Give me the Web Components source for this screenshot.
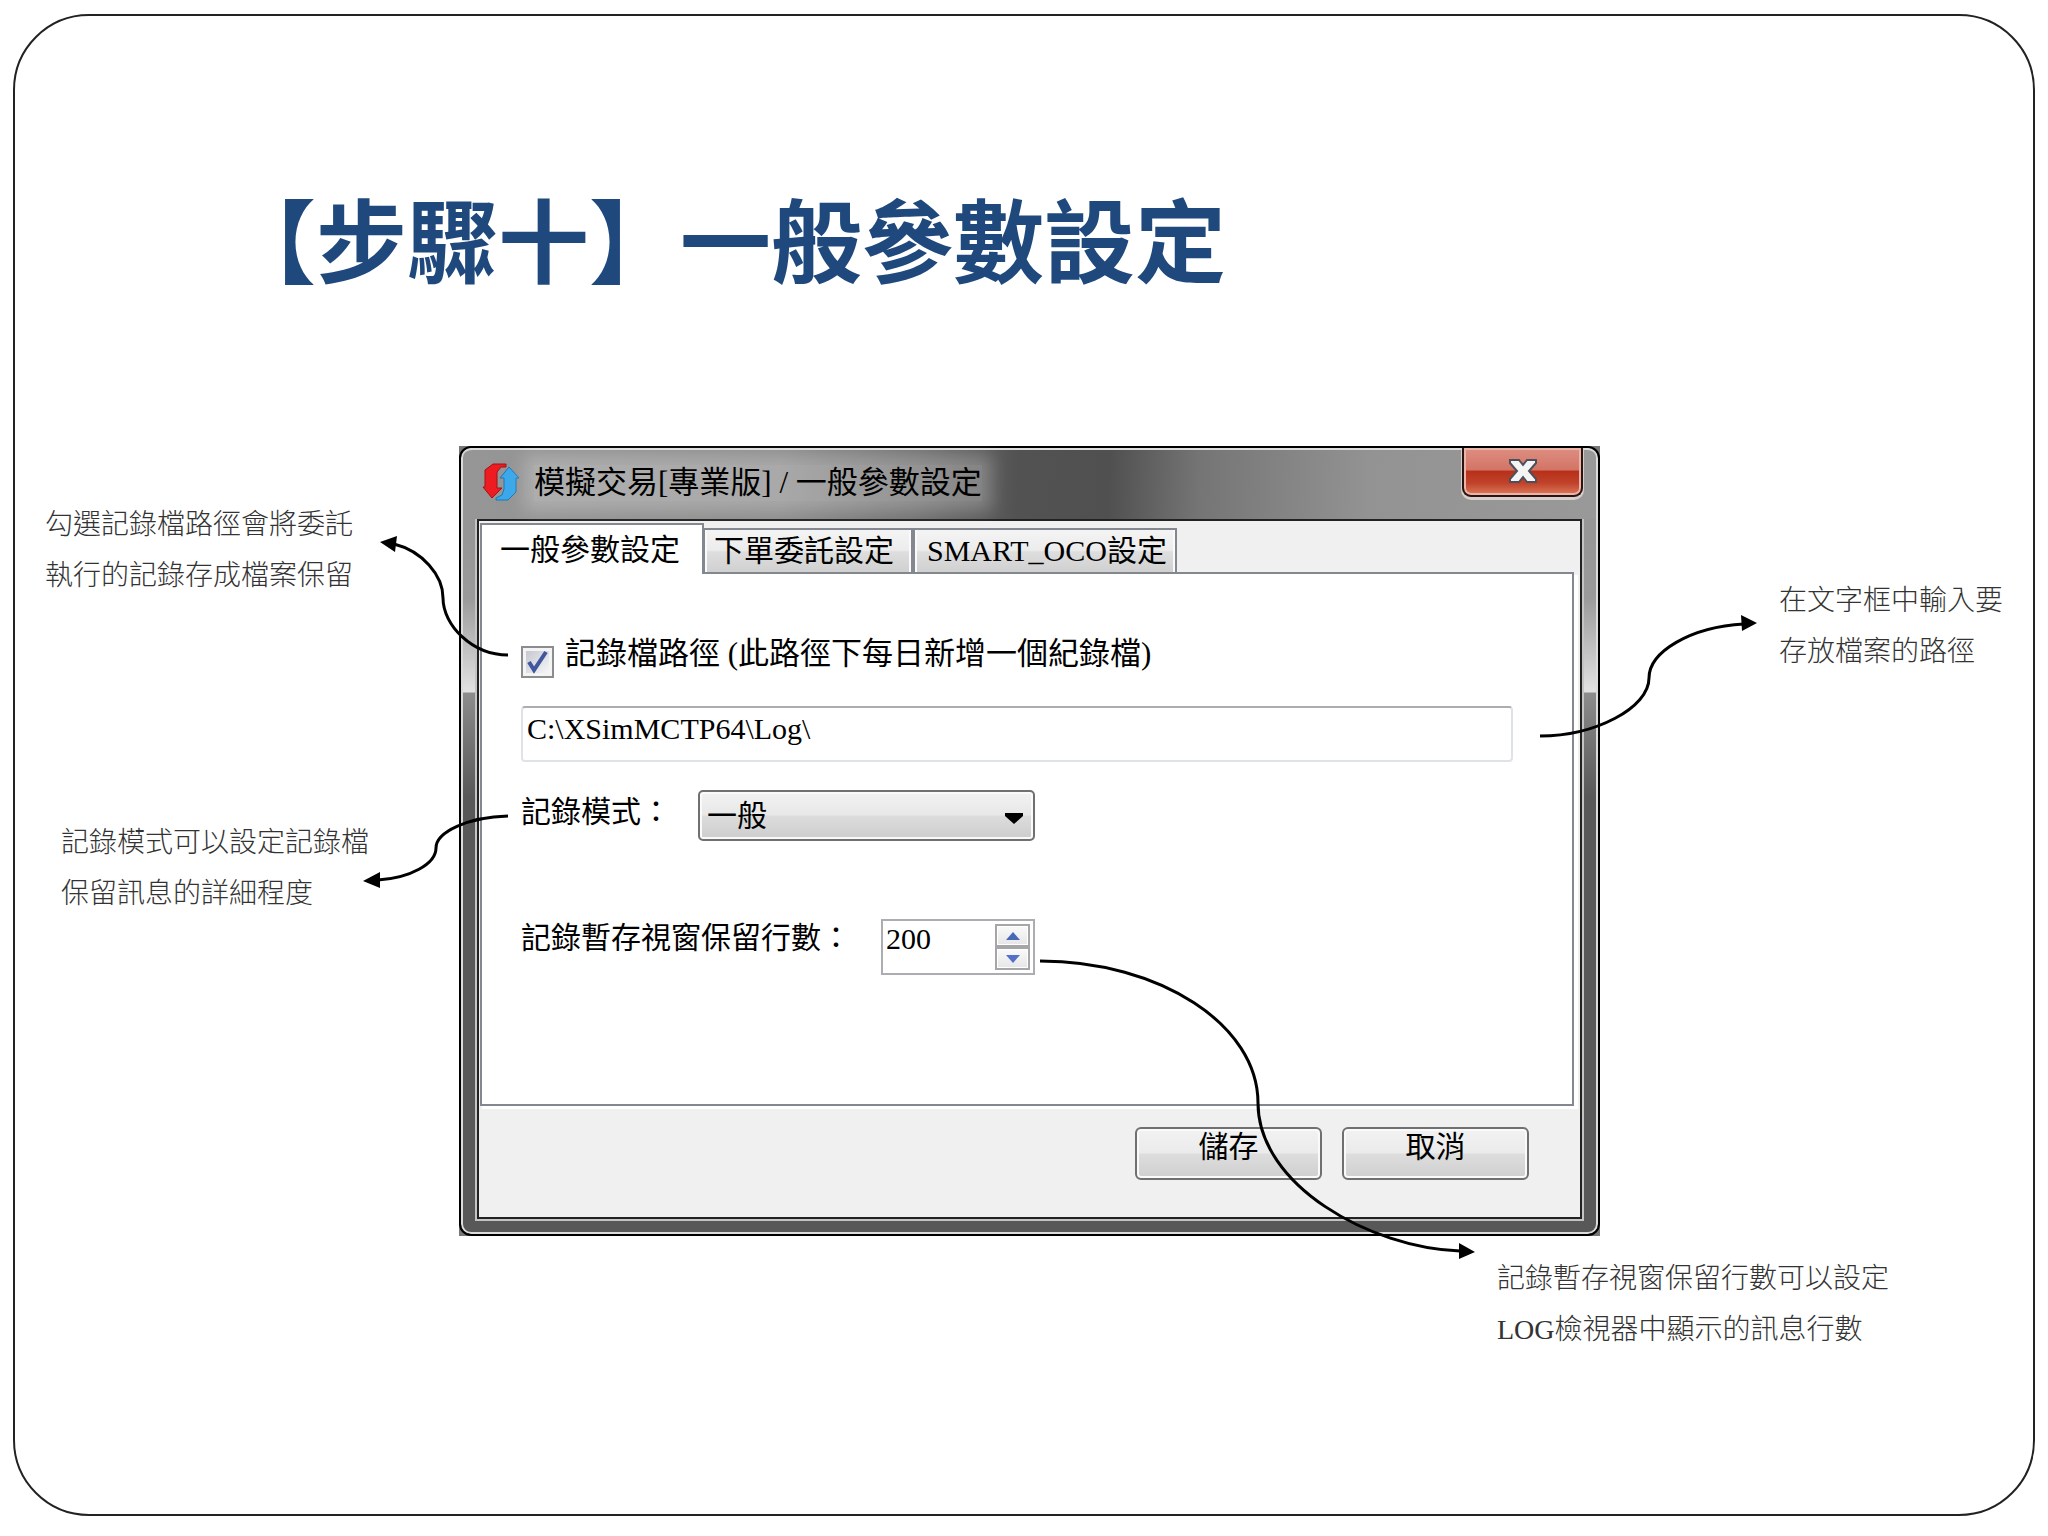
<!DOCTYPE html>
<html lang="zh-Hant">
<head>
<meta charset="utf-8">
<title>一般參數設定</title>
<style>
  body { margin: 0; background: #fff; color: #000; font-family: "Liberation Serif", "Noto Sans CJK TC", serif; }
</style>
</head>
<body>
<slide-page>
  <span slot="title">【步驟十】一般參數設定</span>
  <side-note slot="left" class="path">勾選記錄檔路徑會將委託<br>執行的記錄存成檔案保留</side-note>
  <side-note slot="left" class="mode">記錄模式可以設定記錄檔<br>保留訊息的詳細程度</side-note>
  <app-window slot="window" heading="模擬交易[專業版] / 一般參數設定">
    <tab-bar slot="tabs" items="一般參數設定,下單委託設定,SMART_OCO設定"></tab-bar>
    <check-field label="記錄檔路徑 (此路徑下每日新增一個紀錄檔)"></check-field>
    <path-field label="記錄檔路徑" value="C:\XSimMCTP64\Log\"></path-field>
    <select-field label="記錄模式：" option="一般"></select-field>
    <spin-field label="記錄暫存視窗保留行數：" value="200"></spin-field>
    <push-button slot="actions">儲存</push-button>
    <push-button slot="actions">取消</push-button>
  </app-window>
  <side-note slot="right">在文字框中輸入要<br>存放檔案的路徑</side-note>
  <side-note slot="below">記錄暫存視窗保留行數可以設定<br>LOG檢視器中顯示的訊息行數</side-note>
  <callout-arrows slot="overlay"></callout-arrows>
</slide-page>

<script>
  const define = (name, markup) => customElements.define(name, class extends HTMLElement {
    constructor() {
      super();
      const html = typeof markup === 'function' ? markup(this) : markup;
      this.attachShadow({ mode: 'open' }).innerHTML =
        '<style>*{box-sizing:border-box} button,input,select{font:inherit;color:inherit;margin:0}</style>' + html;
    }
  });

  define('slide-page', `
    <style>
      :host { display: block; box-sizing: border-box; margin: 14px 13px 20px; min-height: calc(100vh - 34px);
        border: 2px solid #222; border-radius: 76px; padding-top: 160px; }
      h1 { margin: 0 0 150px; padding-left: 210px; font: 700 91px/120px "Noto Sans CJK TC", sans-serif; color: #1f497d; }
      .stage { position: relative; }
      .cols { display: grid; grid-template-columns: minmax(0,444fr) minmax(0,1141fr) minmax(0,433fr); }
      .left { padding: 53px 0 0 30px; display: flex; flex-direction: column; gap: 216px; }
      .right { padding: 129px 0 0 179px; }
      .below { display: grid; grid-template-columns: minmax(0,1482fr) minmax(0,536fr); padding-top: 17px; }
      .below slot { display: block; grid-column: 2; }
      .left ::slotted(.mode) { padding-left: 16px; }
    </style>
    <h1><slot name="title"></slot></h1>
    <div class="stage">
      <div class="cols">
        <div class="left"><slot name="left"></slot></div>
        <slot name="window"></slot>
        <div class="right"><slot name="right"></slot></div>
      </div>
      <div class="below"><slot name="below"></slot></div>
      <slot name="overlay"></slot>
    </div>`);

  define('side-note', `
    <style>
      :host { display: block; font-size: 28px; line-height: 51px; font-weight: 300; color: #333; white-space: nowrap; }
    </style><slot></slot>`);

  define('app-window', el => `
    <style>
      :host { display: block; background: #777; font-size: 30px; }
      .frame { border: 2px solid #000; border-radius: 12px; padding: 0 16px 15px;
        box-shadow: inset 0 0 0 2px #dcdcdc;
        background: linear-gradient(#969696 0 90px, #9a9a9a 150px, #e2e2e2 244px, #8c8c8c 245px, #585858 350px); }
      header { display: flex; align-items: center; height: 71px; margin: 0 -14px; padding: 0 14px 4px; position: relative;
        border-top: 2px solid #dcdcdc; border-radius: 9px 9px 0 0;
        background: linear-gradient(92deg, #969696 0, #8e8e8e 28%, #727272 40%, #525252 49%, #505050 57%, #757575 65%, #939393 80%, #999 100%); }
      .logo { width: 38px; height: 40px; margin: 0 18px 0 5px; }
      h2 { margin: 0 -4px; font: inherit; font-size: 31px; line-height: 36px; white-space: nowrap;
        background: #ffffff3d; box-shadow: 0 0 16px 10px #ffffff3d; }
      .close { position: absolute; top: -2px; right: 13px; width: 121px; height: 49px; padding: 0; border: 2px solid #2a1512; border-top: 0;
        border-radius: 0 0 9px 9px; box-shadow: inset 0 0 0 2px #eab5a8, 0 2px 0 1px #d8cfcd;
        background: linear-gradient(#de8e82, #d37566 46%, #b8301a 50%, #c0432a 75%, #dc7a5c); }
      .close svg { display: block; width: 32px; height: 28px; margin: -2px auto 0; }
      .client { border: 2px solid #222; box-shadow: 0 0 0 2px #c4c4c4; background: #f0f0f0; }
      .panel { margin: 0 6px 0 1px; padding: 60px 59px 129px 39px; background: #fff; border: 2px solid #828790; border-top: 0;
        display: flex; flex-direction: column; box-shadow: 3px 2px 0 1px #fff; gap: 28px; }
      .panel ::slotted(spin-field) { margin-top: 50px; }
      footer { display: flex; justify-content: flex-end; gap: 20px; padding: 21px 51px 37px; }
    </style>
    <div class="frame">
      <header>
        <svg class="logo" viewBox="0 0 38 40" aria-hidden="true">
          <path d="M24 1H11L3 7V24H1L10 35L20 25H15V9L19 4H24z" fill="#ee1c20" stroke="#a01216"/>
          <path d="M27 4L37 15H34V29L26 37H14V35L20 32L22 26V15H18z" fill="#3aa8ea" stroke="#1b78b8"/>
        </svg>
        <h2>${el.getAttribute('heading')}</h2>
        <button class="close" aria-label="關閉">
          <svg viewBox="0 0 32 28"><path d="M3 3h9l4 5 4-5h9v3l-7 8 7 8v3h-9l-4-5-4 5H3v-3l7-8-7-8z" fill="#f4f4f4" stroke="#4c4f5c" stroke-width="2"/></svg>
        </button>
      </header>
      <div class="client">
        <slot name="tabs"></slot>
        <div class="panel"><slot></slot></div>
        <footer><slot name="actions"></slot></footer>
      </div>
    </div>`);

  define('tab-bar', el => `
    <style>
      :host { display: flex; align-items: flex-end; padding: 2px 6px 0 1px; height: 53px; box-sizing: border-box; }
      button { height: 46px; padding: 0 17px 0 9px; border: 2px solid #828790; border-left-width: 1px; border-radius: 0; white-space: nowrap;
        line-height: 40px; background: linear-gradient(#f4f4f4, #ececec 48%, #dedede 52%, #d0d0d0); box-shadow: inset -2px 0 #fafafa, inset 2px 0 #fafafa; }
      button:last-of-type { padding: 0 8px 0 12px; border-left-width: 2px; }
      button[aria-selected="true"] { height: 51px; padding: 0 22px 0 18px; background: #fff; border-left-width: 2px; border-bottom: 0; box-shadow: none; }
      i { flex: 1; height: 46px; border-bottom: 2px solid #828790; }
    </style>
    ${el.getAttribute('items').split(',').map((t, n) => `<button role="tab" aria-selected="${n === 0}">${t}</button>`).join('')}<i></i>`);

  define('check-field', el => `
    <style>
      :host { display: flex; align-items: flex-start; gap: 11px; height: 44px; }
      .box { position: relative; align-self: flex-end; width: 33px; height: 32px; }
      input { appearance: none; display: block; width: 33px; height: 32px; border: 2px solid #8a8c90;
        background: linear-gradient(135deg, #c4c8d0, #f6f6f6) content-box, #f4f4f4; padding: 3px; }
      svg { position: absolute; inset: 0; pointer-events: none; }
      label { line-height: 40px; font-size: 31px; white-space: nowrap; }
    </style>
    <div class="box"><input id="c" type="checkbox" checked>
      <svg width="33" height="32"><path d="M8 16l5 8L25 6" fill="none" stroke="#40569e" stroke-width="4"/></svg></div>
    <label for="c">${el.getAttribute('label')}</label>`);

  define('path-field', el => `
    <style>
      :host { display: block; }
      input { display: block; width: 100%; height: 56px; padding: 0 4px 11px; border: 2px solid #dfe2e6; border-top-color: #abadb3; border-radius: 4px; background: #fff; outline: 0; }
    </style>
    <input type="text" aria-label="${el.getAttribute('label')}" value="${el.getAttribute('value')}">`);

  define('select-field', el => `
    <style>
      :host { display: flex; align-items: flex-start; gap: 27px; }
      label { line-height: 44px; white-space: nowrap; }
      .box { position: relative; width: 337px; }
      select { appearance: none; display: block; width: 100%; height: 51px; padding: 0 0 0 7px; border: 2px solid #707070; border-radius: 5px;
        background: linear-gradient(#f2f2f2, #e8e8e8 48%, #dcdcdc 52%, #cdcdcd); box-shadow: inset 0 0 0 2px #fafafa; }
      svg { position: absolute; right: 12px; top: 23px; pointer-events: none; }
    </style>
    <label for="s">${el.getAttribute('label')}</label>
    <div class="box"><select id="s"><option>${el.getAttribute('option')}</option></select>
      <svg width="18" height="11"><path d="M0 0h18v3l-9 8-9-8z"/></svg></div>`);

  define('spin-field', el => `
    <style>
      :host { display: flex; align-items: flex-start; gap: 30px; }
      label { line-height: 38px; white-space: nowrap; }
      .box { display: flex; width: 154px; height: 56px; border: 2px solid #abadb3; background: #fff; padding: 3px; }
      input { appearance: textfield; flex: 1; min-width: 0; height: 30px; padding: 0; border: 0; background: none; outline: 0; }
      input::-webkit-inner-spin-button { appearance: none; }
      .steps { display: flex; flex-direction: column; width: 35px; }
      button { flex: 1; padding: 0; border: 2px solid #a6a6a8; background: linear-gradient(#fafafa, #e6e6e8); border-radius: 0; display: grid; place-items: center; box-shadow: inset 0 0 0 1px #fff; }
    </style>
    <label for="n">${el.getAttribute('label')}</label>
    <div class="box"><input id="n" type="number" value="${el.getAttribute('value')}">
      <div class="steps">
        <button aria-label="增加"><svg width="14" height="8"><path d="M7 0l7 8H0z" fill="#4a66b8"/></svg></button>
        <button aria-label="減少"><svg width="14" height="8"><path d="M0 0h14L7 8z" fill="#5570c8"/></svg></button>
      </div></div>`);

  define('push-button', `
    <style>
      :host { display: block; }
      button { display: block; width: 187px; height: 53px; padding: 0 0 13px; border: 2px solid #707070; border-radius: 6px; line-height: 36px;
        background: linear-gradient(#f2f2f2, #ebebeb 48%, #dddddd 52%, #cfcfcf); box-shadow: inset 0 0 0 2px #fafafa; }
    </style><button><slot></slot></button>`);

  define('callout-arrows', `
    <style>
      :host { position: absolute; inset: 0; pointer-events: none; }
      svg { display: block; width: 100%; height: 100%; overflow: visible; }
    </style>
    <svg viewBox="15 446 2018 906" preserveAspectRatio="xMinYMin" aria-hidden="true">
      <g fill="none" stroke="#000" stroke-width="3">
        <path d="M508 655C472 655 443 625 443 598C443 575 422 551 394 544"/>
        <path d="M508 816C468 817 436 832 436 848C436 864 410 878 378 880"/>
        <path d="M1540 736C1595 736 1649 708 1649 678C1649 652 1690 627 1744 624"/>
        <path d="M1040 961C1160 961 1258 1025 1258 1103C1258 1185 1370 1248 1460 1251"/>
      </g>
      <path d="M380 542l17-6-2 16zM363 881l17-9v16zM1757 623l-16-8 1 16zM1475 1252l-16-9v16z"/>
    </svg>`);
</script>
</body>
</html>
